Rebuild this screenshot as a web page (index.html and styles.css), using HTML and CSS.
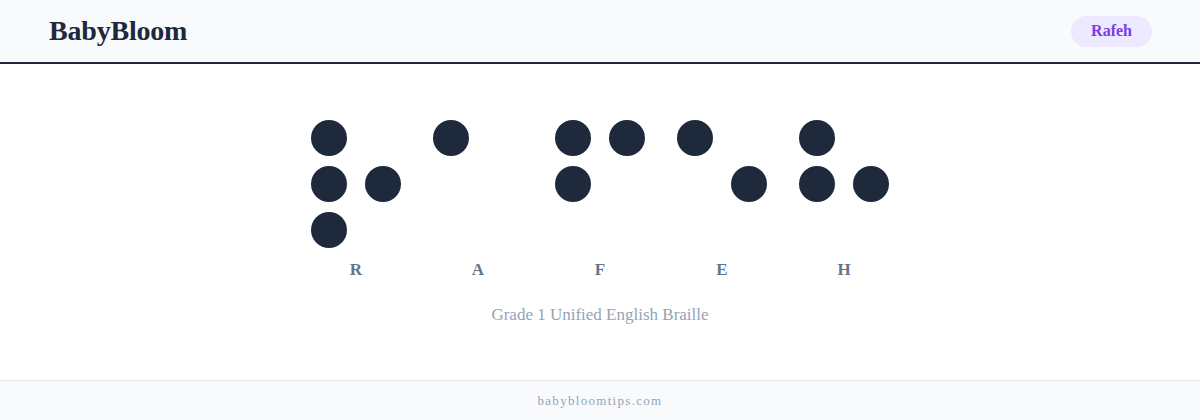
FILE: index.html
```html
<!DOCTYPE html>
<html lang="en">
<head>
    <meta charset="UTF-8">
    <meta name="viewport" content="width=device-width, initial-scale=1.0">
    <title>BabyBloom - Braille</title>
    <link rel="stylesheet" href="styles.css">
</head>
<body>
    <header class="site-header">
        <div class="logo">BabyBloom</div>
        <div class="name-badge">Rafeh</div>
    </header>

    <main class="braille-main">
        <div class="braille-row">
            <div class="cell">
                <div class="dots">
                    <span class="dot on"></span><span class="dot"></span>
                    <span class="dot on"></span><span class="dot on"></span>
                    <span class="dot on"></span><span class="dot"></span>
                </div>
                <div class="letter">R</div>
            </div>
            <div class="cell">
                <div class="dots">
                    <span class="dot on"></span><span class="dot"></span>
                    <span class="dot"></span><span class="dot"></span>
                    <span class="dot"></span><span class="dot"></span>
                </div>
                <div class="letter">A</div>
            </div>
            <div class="cell">
                <div class="dots">
                    <span class="dot on"></span><span class="dot on"></span>
                    <span class="dot on"></span><span class="dot"></span>
                    <span class="dot"></span><span class="dot"></span>
                </div>
                <div class="letter">F</div>
            </div>
            <div class="cell">
                <div class="dots">
                    <span class="dot on"></span><span class="dot"></span>
                    <span class="dot"></span><span class="dot on"></span>
                    <span class="dot"></span><span class="dot"></span>
                </div>
                <div class="letter">E</div>
            </div>
            <div class="cell">
                <div class="dots">
                    <span class="dot on"></span><span class="dot"></span>
                    <span class="dot on"></span><span class="dot on"></span>
                    <span class="dot"></span><span class="dot"></span>
                </div>
                <div class="letter">H</div>
            </div>
        </div>
        <p class="caption">Grade 1 Unified English Braille</p>
    </main>

    <footer class="site-footer">babybloomtips.com</footer>
</body>
</html>
```

FILE: styles.css
```css
body {
    margin: 0;
    height: 100vh;
    display: flex;
    flex-direction: column;
    background-color: #ffffff;
    font-family: "Liberation Serif", "DejaVu Serif", serif;
    color: #1e293b;
    overflow: hidden;
}
.site-header {
    height: 64px;
    box-sizing: border-box;
    padding: 0 48px 0 49px;
    display: flex;
    align-items: center;
    justify-content: space-between;
    background-color: #f8fafc;
    border-bottom: 2px solid #1e293b;
    flex-shrink: 0;
}
.logo {
    font-size: 28px;
    font-weight: bold;
    color: #1e293b;
    letter-spacing: -0.2px;
}
.name-badge {
    height: 31px;
    padding: 0 20px;
    display: flex;
    align-items: center;
    border-radius: 16px;
    background-color: #ede9fe;
    color: #7c3aed;
    font-size: 16px;
    font-weight: bold;
}
.braille-main {
    flex: 1;
    display: flex;
    flex-direction: column;
    align-items: center;
    padding-top: 56px;
}
.braille-row {
    display: flex;
    gap: 32px;
}
.cell {
    display: flex;
    flex-direction: column;
    align-items: center;
}
.dots {
    display: grid;
    grid-template-columns: 36px 36px;
    grid-auto-rows: 36px;
    column-gap: 18px;
    row-gap: 10px;
}
.dot {
    border-radius: 50%;
}
.dot.on {
    background-color: #1e293b;
}
.letter {
    margin-top: 10px;
    line-height: 24px;
    font-size: 17px;
    font-weight: bold;
    color: #64748b;
}
.caption {
    margin: 22px 0 0;
    line-height: 22px;
    font-size: 17px;
    color: #94a3b8;
}
.site-footer {
    height: 39px;
    display: flex;
    align-items: center;
    justify-content: center;
    background-color: #f8fafc;
    border-top: 1px solid #e2e8f0;
    font-size: 13px;
    letter-spacing: 1.3px;
    color: #94a3b8;
    flex-shrink: 0;
}
```
